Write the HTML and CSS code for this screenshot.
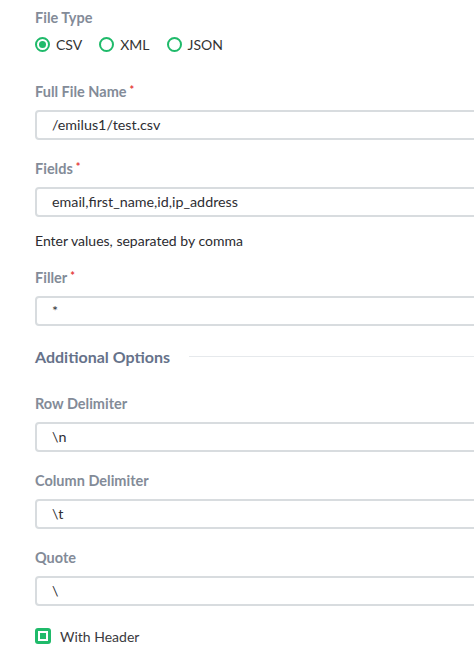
FILE: index.html
```html
<!DOCTYPE html>
<html>
<head>
<meta charset="utf-8">
<link rel="stylesheet" href="styles.css">
</head>
<body>
<form class="form">
  <div class="label">File Type</div>
  <div class="radio-group">
    <label class="radio"><span class="radio-dot checked"></span><span>CSV</span></label>
    <label class="radio"><span class="radio-dot"></span><span>XML</span></label>
    <label class="radio"><span class="radio-dot"></span><span>JSON</span></label>
  </div>

  <div class="item first">
    <div class="label">Full File Name<span class="req">*</span></div>
    <div class="input">/emilus1/test.csv</div>
  </div>

  <div class="item with-help">
    <div class="label">Fields<span class="req">*</span></div>
    <div class="input">email,first_name,id,ip_address</div>
    <div class="help">Enter values, separated by comma</div>
  </div>

  <div class="item">
    <div class="label">Filler<span class="req">*</span></div>
    <div class="input">*</div>
  </div>

  <div class="section">
    <span class="section-title">Additional Options</span>
    <span class="section-line"></span>
  </div>

  <div class="item">
    <div class="label">Row Delimiter</div>
    <div class="input">\n</div>
  </div>

  <div class="item">
    <div class="label">Column Delimiter</div>
    <div class="input">\t</div>
  </div>

  <div class="item">
    <div class="label">Quote</div>
    <div class="input">\</div>
  </div>

  <label class="checkbox"><span class="check-box"><span class="check-inner"></span></span><span>With Header</span></label>
</form>
</body>
</html>
```
FILE: styles.css
```css
html, body {
  margin: 0;
  padding: 0;
  background: #ffffff;
  overflow: hidden;
}
body {
  font-family: Lato, "Open Sans", sans-serif;
  font-size: 13px;
  color: #2e2e33;
}
.form {
  padding: 8px 0 0 35px;
  width: 460px;
}
.label {
  height: 20px;
  line-height: 20px;
  font-size: 14.5px;
  font-weight: 700;
  color: #838b98;
}
.req {
  color: #e53a3a;
  font-size: 11px;
  margin-left: 3px;
  position: relative;
  top: -3px;
}
.radio-group {
  display: flex;
  gap: 17px;
  height: 20px;
  margin-top: 6px;
  align-items: center;
}
.radio {
  display: flex;
  align-items: center;
  gap: 6px;
  font-size: 14px;
  color: #333;
}
.radio-dot {
  width: 11px;
  height: 11px;
  border: 2.5px solid #1fba6a;
  border-radius: 50%;
  display: flex;
  align-items: center;
  justify-content: center;
  box-sizing: content-box;
}
.radio-dot.checked::after {
  content: "";
  width: 7px;
  height: 7px;
  border-radius: 50%;
  background: #1fba6a;
}
.item {
  margin-bottom: 19px;
}
.item.first {
  margin-top: 28px;
}
.item .label {
  margin-bottom: 8px;
}
.input {
  box-sizing: border-box;
  height: 30px;
  border: 2px solid #d8dcdf;
  border-radius: 4px;
  padding: 0 15px;
  line-height: 26px;
  font-size: 14.3px;
  color: #2e2e33;
  background: #fff;
}
.item.with-help {
  margin-bottom: 17px;
}
.help {
  margin-top: 14px;
  height: 20px;
  line-height: 20px;
  font-size: 14px;
  color: #2b2b30;
}
.section {
  display: flex;
  align-items: center;
  gap: 19px;
  height: 22px;
  margin-top: 1px;
  margin-bottom: 27px;
}
.section-title {
  font-size: 16px;
  font-weight: 700;
  color: #66728a;
  white-space: nowrap;
}
.section-line {
  flex: 1;
  height: 1px;
  background: #e6e9ec;
}
.checkbox {
  display: flex;
  align-items: center;
  gap: 9px;
  height: 20px;
  margin-top: 20px;
  font-size: 14px;
  color: #3a3a40;
}
.check-box {
  width: 16px;
  height: 16px;
  border-radius: 3px;
  background: #1fba6a;
  display: flex;
  align-items: center;
  justify-content: center;
}
.check-inner {
  width: 6px;
  height: 6px;
  background: #1fba6a;
  border: 2px solid #fff;
}
```
